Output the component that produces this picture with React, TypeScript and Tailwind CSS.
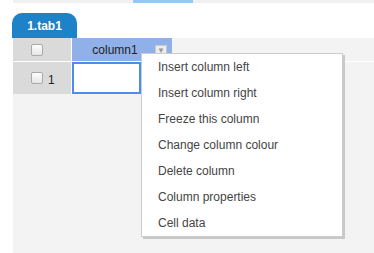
export default function App() {
  const items = [
    "Insert column left",
    "Insert column right",
    "Freeze this column",
    "Change column colour",
    "Delete column",
    "Column properties",
    "Cell data",
  ];

  const Checkbox = () => (
    <span className="inline-block w-[12px] h-[12px] rounded-[2px] border border-[#a9a9a9] bg-gradient-to-b from-[#fdfdfd] to-[#e6e6e6]" />
  );

  return (
    <div className="relative w-[374px] h-[253px] bg-white overflow-hidden font-['Liberation_Sans',Arial,sans-serif] text-[12px]">
      {/* top strip */}
      <div className="ml-[13px] h-[3px] flex bg-[#f0f0f0]">
        <div className="w-[120px]" />
        <div className="w-[60px] bg-[#90caf5]" />
      </div>

      {/* tab */}
      <div className="ml-[12px] mt-[10px] w-[65px] h-[25px] rounded-t-[10px] bg-[#1e82c8] text-white font-bold flex items-center justify-center">
        1.tab1
      </div>

      {/* sheet */}
      <div className="ml-[13px] h-[215px] bg-[#f3f3f3]">
        <div className="flex h-[24px] border-b border-white">
          <div className="w-[59px] bg-[#dadada] border-r border-white flex items-center pl-[18px]">
            <Checkbox />
          </div>
          <div className="w-[100px] bg-[#8fb0e8] flex items-center text-[#222]">
            <span className="flex-1 text-center pl-[3px]">column1</span>
            <span className="mr-[5px] mt-[2px] w-[12px] h-[12px] border border-[#c8c8c8] bg-[#ececec] flex items-start justify-center text-[8px] leading-[10px] text-[#999]">
              ▼
            </span>
          </div>
        </div>
        <div className="flex h-[32px]">
          <div className="w-[59px] bg-[#dadada] border-r border-white flex items-center pl-[18px] gap-[5px] text-[#222]">
            <Checkbox />
            <span className="mt-[3px]">1</span>
          </div>
          <div className="w-[69px] bg-white border-2 border-[#4a8cf0]" />
        </div>
      </div>

      {/* context menu */}
      <div className="absolute left-[141px] top-[53px] w-[202px] bg-white border border-[#cccccc] shadow-[2px_2px_0_#c8c8c8] py-0 text-[#444]">
        {items.map((t) => (
          <div key={t} className="h-[26px] flex items-center pl-[16px]">
            {t}
          </div>
        ))}
      </div>
    </div>
  );
}
